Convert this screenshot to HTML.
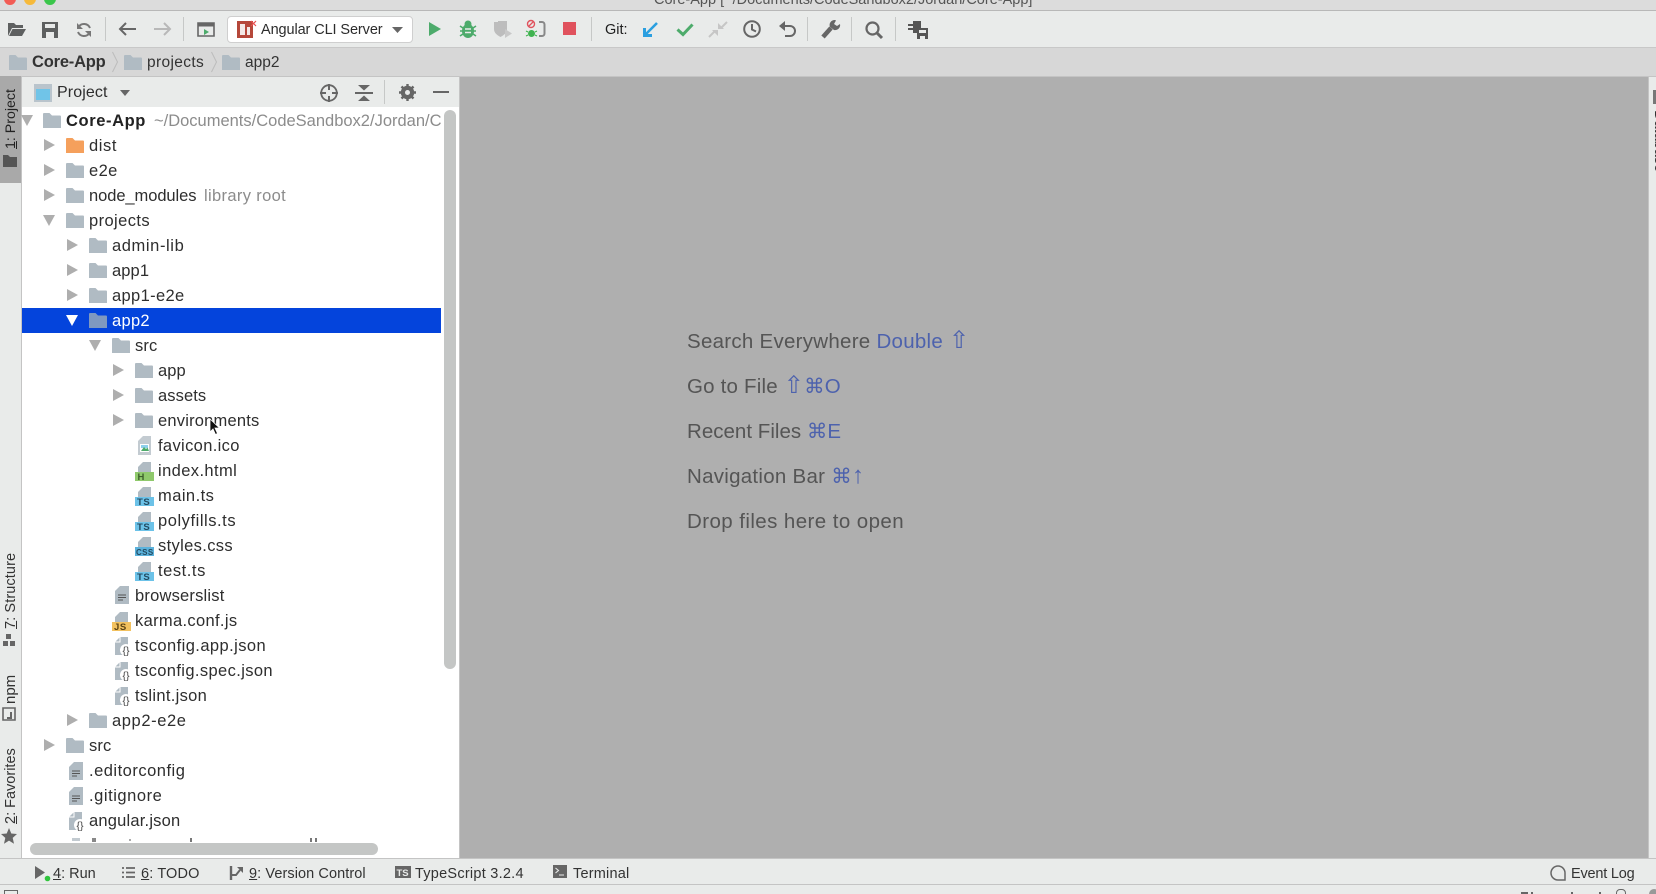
<!DOCTYPE html>
<html><head><meta charset="utf-8"><style>
html,body{margin:0;padding:0;width:1656px;height:894px;overflow:hidden;background:#e9ebea;font-family:"Liberation Sans",sans-serif;color:#333}
body{filter:blur(.3px)}
.a{position:absolute}
.t{position:absolute;white-space:nowrap;line-height:20px}
.r{position:absolute;white-space:nowrap;font-size:16.5px;line-height:25px;height:25px;margin-top:1px;color:#2e2e2e;letter-spacing:.1px}
.g{color:#8c8c8c}
svg{position:absolute;overflow:visible}
.sep{position:absolute;width:1px;background:#c6c8c7}
.v{position:absolute;white-space:nowrap;font-size:14.5px;line-height:16px;transform-origin:0 0;transform:rotate(-90deg);color:#333}
.w{position:absolute;left:687px;font-size:20.5px;line-height:26px;height:26px;white-space:nowrap;color:#555;letter-spacing:.42px}
.w b{font-weight:normal;color:#4d62ad}
.w i{font-style:normal;font-size:24px;line-height:0}
.f{position:absolute;font-size:14.5px;line-height:20px;top:864px;white-space:nowrap;color:#333}
u{text-decoration:underline}
</style></head><body>
<svg width="0" height="0" style="position:absolute"><defs>
<symbol id="fo" viewBox="0 0 18 15"><path d="M0 1a1 1 0 0 1 1-1h5.500L9 2.500h8a1 1 0 0 1 1 1V15H0z" fill="#b0bbc3"/></symbol>
<symbol id="ar" viewBox="0 0 11 12"><path d="M0 0l11 6-11 6z" fill="#aeaeae"/></symbol>
<symbol id="ad" viewBox="0 0 12 11"><path d="M0 0h12l-6 11z" fill="#aeaeae"/></symbol>
<symbol id="tx" viewBox="0 0 14 18"><path d="M0 5l5-5h9v18H0z" fill="#b0bbc3"/><path d="M3 9h8M3 11.500h8M3 14h5" stroke="#555" stroke-width="1" fill="none"/></symbol>
<symbol id="js" viewBox="0 0 18 19" overflow="visible"><path d="M0 5l5-5h8v18H0z" fill="#b0bbc3"/><path d="M5 0v5H0" stroke="#fff" fill="none"/><circle cx="11" cy="13" r="6" fill="#fff"/><text x="11" y="17" text-anchor="middle" font-size="10.500" font-family="Liberation Sans" fill="#444">{}</text></symbol>
</defs></svg>

<!-- title -->
<div class="a" style="left:0;top:0;width:1656px;height:10px;background:#dcdcdc;overflow:hidden">
<div class="a" style="left:4px;top:-7px;width:12px;height:12px;border-radius:6px;background:#f25c55"></div>
<div class="a" style="left:24px;top:-7px;width:12px;height:12px;border-radius:6px;background:#f6b93a"></div>
<div class="a" style="left:44px;top:-7px;width:12px;height:12px;border-radius:6px;background:#3bc64b"></div>
<div class="t" style="left:654px;top:-10px;font-size:14.5px;color:#555">Core-App [~/Documents/CodeSandbox2/Jordan/Core-App]</div>
</div>
<div class="a" style="left:0;top:10px;width:1656px;height:1px;background:#b8b8b8"></div>

<!-- toolbar -->
<div class="a" style="left:0;top:11px;width:1656px;height:36px;background:#e9ebea"></div>
<div class="a" style="left:0;top:47px;width:1656px;height:1px;background:#c8c8c8"></div>
<svg style="left:8px;top:22px" width="18" height="14"><path d="M0 14V1h6l2 2h7v3H4z" fill="#5e6060"/><path d="M1 14L4.500 7H18l-4 7z" fill="#5e6060"/></svg>
<svg style="left:42px;top:22px" width="16" height="16"><path d="M0 0h16v16H0z" fill="#5e6060"/><path d="M3 2h10v4H3zM4 10h8v6H4z" fill="#e9ebea"/></svg>
<svg style="left:76px;top:22px" width="16" height="16"><path d="M14 6A6.500 6.500 0 0 0 2.500 5M2 10a6.500 6.500 0 0 0 11.500 1" fill="none" stroke="#777" stroke-width="2"/><path d="M1 1v6h6zM15 15V9H9z" fill="#777"/></svg>
<div class="sep" style="left:105px;top:17px;height:24px"></div>
<svg style="left:119px;top:22px" width="17" height="14"><path d="M7 1L1 7l6 6M1 7h16" fill="none" stroke="#666" stroke-width="2"/></svg>
<svg style="left:154px;top:22px" width="17" height="14"><path d="M10 1l6 6-6 6M16 7H0" fill="none" stroke="#b8b8b8" stroke-width="2"/></svg>
<div class="sep" style="left:183px;top:17px;height:24px"></div>
<svg style="left:197px;top:22px" width="18" height="15"><path d="M1 1h16v13H1z" fill="none" stroke="#666" stroke-width="1.600"/><path d="M1 1h16v3.500H1z" fill="#666"/><path d="M7 7l5 3-5 3z" fill="#4dab6b"/></svg>
<div class="a" style="left:227px;top:16px;width:184px;height:25px;background:#fff;border:1px solid #cfcfcf;border-radius:4px"></div>
<svg style="left:237px;top:20px" width="19" height="18"><path d="M0 1h16v17H0z" fill="#b5473a"/><path d="M3 4h5v11H3zM10 7h3v8h-3z" fill="#f3e9e7"/><path d="M14 1l5 5M19 1l-5 5" stroke="#e85050" stroke-width="1.200"/></svg>
<div class="t" style="left:261px;top:20px;font-size:14.5px;color:#2c2c2c;letter-spacing:-.1px">Angular CLI Server</div>
<svg style="left:392px;top:27px" width="11" height="6"><path d="M0 0h11L5.500 6z" fill="#666"/></svg>
<svg style="left:429px;top:22px" width="12" height="14"><path d="M0 0l12 7-12 7z" fill="#4dab6b"/></svg>
<svg style="left:460px;top:20px" width="16" height="18"><ellipse cx="8" cy="11" rx="6" ry="7" fill="#4dab6b"/><circle cx="8" cy="4" r="3.500" fill="#4dab6b"/><path d="M0 6l3 2M16 6l-3 2M0 11h3M16 11h-3M0 16l3-2M16 16l-3-2" stroke="#4dab6b" stroke-width="1.600"/><path d="M5 9h6M5 12.500h6" stroke="#e9ebea" stroke-width="1.500"/></svg>
<svg style="left:494px;top:21px" width="18" height="17"><path d="M0 1h4v-1h9v8c0 4-3 6-6.500 8C3 14 0 12 0 8z" fill="#bdbdbd"/><path d="M11 8l7 4.500-7 4.500z" fill="#c8c8c8"/></svg>
<svg style="left:526px;top:20px" width="20" height="18"><circle cx="5" cy="4" r="3.500" fill="none" stroke="#e0525d" stroke-width="1.400"/><path d="M2.500 6.500l5-5" stroke="#e0525d" stroke-width="1.300"/><ellipse cx="5.500" cy="13.500" rx="3.500" ry="3.500" fill="#3fb34f"/><path d="M0 11l2 1M0 16l2-1M11 11l-2 1M11 16l-2-1" stroke="#3fb34f"/><path d="M13 2h3a2.500 2.500 0 0 1 2.500 2.500v9A2.500 2.500 0 0 1 16 16h-3" fill="none" stroke="#888" stroke-width="2"/></svg>
<div class="a" style="left:563px;top:22px;width:13px;height:13px;background:#e0525d"></div>
<div class="sep" style="left:591px;top:17px;height:24px"></div>
<div class="t" style="left:605px;top:20px;font-size:14.5px;color:#1e1e1e">Git:</div>
<svg style="left:643px;top:22px" width="15" height="15"><path d="M14 1L3 12" stroke="#2b9fe0" stroke-width="2.600"/><path d="M0 6v9h9v-3H3V6z" fill="#2b9fe0"/></svg>
<svg style="left:676px;top:23px" width="18" height="13"><path d="M1.500 6.500L7 11.500 16.500 1.500" fill="none" stroke="#4dab6b" stroke-width="3"/></svg>
<svg style="left:709px;top:21px" width="18" height="17"><path d="M0 16l6-6M18 1l-6 6" stroke="#c6c6c6" stroke-width="2"/><path d="M3 9h6v6zM15 8H9V2z" fill="#c6c6c6"/></svg>
<svg style="left:743px;top:20px" width="18" height="18"><circle cx="9" cy="9" r="7.800" fill="none" stroke="#666" stroke-width="2"/><path d="M9 4v5.500l4 2" fill="none" stroke="#666" stroke-width="2"/></svg>
<svg style="left:779px;top:21px" width="17" height="16"><path d="M3 5h8a5 5 0 0 1 0 10H6" fill="none" stroke="#666" stroke-width="2"/><path d="M6 0v10L0 5z" fill="#666"/></svg>
<div class="sep" style="left:807px;top:17px;height:24px"></div>
<svg style="left:821px;top:20px" width="19" height="19"><path d="M2 17L10 8" stroke="#666" stroke-width="4.500"/><path d="M14 0a5 5 0 0 0-5 7l4 3a5 5 0 0 0 6-6l-3 2-3-2 2-3.500z" fill="#666"/></svg>
<div class="sep" style="left:851px;top:17px;height:24px"></div>
<svg style="left:865px;top:21px" width="18" height="18"><circle cx="7.500" cy="7.500" r="6" fill="none" stroke="#666" stroke-width="2.200"/><path d="M12 12l5 5" stroke="#666" stroke-width="3"/></svg>
<div class="sep" style="left:895px;top:17px;height:24px"></div>
<svg style="left:908px;top:21px" width="20" height="18"><path d="M5 0h8v12H5zM0 3h5v2H0zM0 7h5v2H0z" fill="#555"/><path d="M9 7h11v11H9z" fill="#555"/><path d="M11 9h7v3h-7zM12 15h5v3h-5z" fill="#e9ebea"/></svg>

<!-- breadcrumb -->
<div class="a" style="left:0;top:48px;width:1656px;height:28px;background:#d7d7d7"></div>
<div class="a" style="left:0;top:76px;width:1656px;height:1px;background:#c4c4c4"></div>
<svg style="left:9px;top:55px" width="18" height="15"><use href="#fo"/></svg>
<div class="t" style="left:32px;top:52px;font-size:16.5px;font-weight:bold;color:#333;letter-spacing:-.2px">Core-App</div>
<svg style="left:112px;top:52px" width="6" height="20"><path d="M.5 0L5.500 10 .5 20" fill="none" stroke="#bcbcbc"/></svg>
<svg style="left:124px;top:55px" width="18" height="15"><use href="#fo"/></svg>
<div class="t" style="left:147px;top:53px;font-size:15.5px;color:#333;letter-spacing:.35px">projects</div>
<svg style="left:211px;top:52px" width="6" height="20"><path d="M.5 0L5.500 10 .5 20" fill="none" stroke="#bcbcbc"/></svg>
<svg style="left:222px;top:55px" width="18" height="15"><use href="#fo"/></svg>
<div class="t" style="left:245px;top:53px;font-size:15.5px;color:#333">app2</div>

<!-- left strip -->
<div class="a" style="left:0;top:77px;width:21px;height:781px;background:#e9ebea"></div>
<div class="a" style="left:21px;top:77px;width:1px;height:781px;background:#c4c4c4"></div>
<div class="a" style="left:0;top:76px;width:21px;height:107px;background:#a9a9a9"></div>
<div class="v" style="left:3px;top:149px;color:#222;font-size:14.2px"><u>1</u>: Project</div>
<svg style="left:3px;top:155px" width="14" height="12"><path d="M0 0h5l2 2h7v10H0z" fill="#555"/></svg>
<div class="v" style="left:3px;top:629px;letter-spacing:.1px"><u>7</u>: Structure</div>
<svg style="left:3px;top:634px" width="13" height="12"><path d="M3 0h5v5H3zM0 7h5v5H0zM7 7h5v5H7z" fill="#666"/></svg>
<div class="v" style="left:3px;top:704px;font-size:15px">npm</div>
<svg style="left:2px;top:707px" width="14" height="14"><path d="M1 1h12v12H1z" fill="none" stroke="#666" stroke-width="1.600"/><path d="M8 5h2v7H5v-2h3z" fill="#666"/></svg>
<div class="v" style="left:3px;top:824px"><u>2</u>: Favorites</div>
<svg style="left:1px;top:828px" width="16" height="16"><path d="M8 0l2.300 5.500 5.700.5-4.300 3.900 1.300 5.800L8 12.600l-5 3.100 1.300-5.800L0 6l5.700-.5z" fill="#666"/></svg>

<!-- project panel -->
<div class="a" style="left:22px;top:77px;width:437px;height:30px;background:#e9ebea"></div>
<div class="a" style="left:22px;top:107px;width:437px;height:751px;background:#fff;overflow:hidden"></div>
<div class="a" style="left:459px;top:77px;width:1px;height:781px;background:#c4c4c4"></div>
<svg style="left:34px;top:84px" width="18" height="18"><path d="M0 0h18v18H0z" fill="#b9c4cc"/><path d="M2 5h14v11H2z" fill="#70c4e8"/></svg>
<div class="t" style="left:57px;top:83px;font-size:16px;color:#2e2e2e;letter-spacing:.1px">Project</div>
<svg style="left:120px;top:90px" width="10" height="6"><path d="M0 0h10L5 6z" fill="#666"/></svg>
<svg style="left:320px;top:84px" width="18" height="18"><circle cx="9" cy="9" r="7.800" fill="none" stroke="#666" stroke-width="1.800"/><path d="M0 9h6M12 9h6M9 0v6M9 12v6" stroke="#666" stroke-width="2"/></svg>
<svg style="left:355px;top:84px" width="18" height="18"><path d="M0 9h18" stroke="#666" stroke-width="2"/><path d="M3 1h12L9 6.500zM3 17h12L9 11.500z" fill="#666"/></svg>
<div class="sep" style="left:384px;top:80px;height:24px"></div>
<svg style="left:399px;top:84px" width="17" height="17"><circle cx="8.500" cy="8.500" r="5" fill="none" stroke="#666" stroke-width="3.400"/><path d="M8.500 0v17M0 8.500h17M2.500 2.500l12 12M14.500 2.500l-12 12" stroke="#666" stroke-width="2.400"/><circle cx="8.500" cy="8.500" r="2.500" fill="#e9ebea"/></svg>
<div class="a" style="left:433px;top:91px;width:16px;height:2px;background:#666"></div>

<!-- selection -->
<div class="a" style="left:22px;top:308px;width:419px;height:25px;background:#0444dc"></div>

<!-- tree -->
<svg style="left:21px;top:115px" width="12" height="11"><use href="#ad"/></svg>
<svg style="left:43px;top:113px" width="18" height="15"><use href="#fo"/></svg>
<div class="a" style="left:66px;top:109px;width:375px;height:25px;overflow:hidden;white-space:nowrap;font-size:16.5px;line-height:25px;color:#8c8c8c"><b style="color:#222;margin-right:8px;letter-spacing:.6px">Core-App</b>~/Documents/CodeSandbox2/Jordan/Core-App</div>

<svg style="left:44px;top:139px" width="11" height="12"><use href="#ar"/></svg>
<svg style="left:66px;top:138px" width="18" height="15"><path d="M0 1a1 1 0 0 1 1-1h5.500L9 2.500h8a1 1 0 0 1 1 1V15H0z" fill="#f5a05c"/></svg>
<div class="r" style="left:89px;top:133px;letter-spacing:.6px">dist</div>

<svg style="left:44px;top:164px" width="11" height="12"><use href="#ar"/></svg>
<svg style="left:66px;top:163px" width="18" height="15"><use href="#fo"/></svg>
<div class="r" style="left:89px;top:158px;letter-spacing:.4px">e2e</div>

<svg style="left:44px;top:189px" width="11" height="12"><use href="#ar"/></svg>
<svg style="left:66px;top:188px" width="18" height="15"><use href="#fo"/></svg>
<div class="r" style="left:89px;top:183px;letter-spacing:-.07px">node_modules <span class="g" style="margin-left:3px;letter-spacing:.35px">library root</span></div>

<svg style="left:43px;top:215px" width="12" height="11"><use href="#ad"/></svg>
<svg style="left:66px;top:213px" width="18" height="15"><use href="#fo"/></svg>
<div class="r" style="left:89px;top:208px;letter-spacing:.4px">projects</div>

<svg style="left:67px;top:239px" width="11" height="12"><use href="#ar"/></svg>
<svg style="left:89px;top:238px" width="18" height="15"><use href="#fo"/></svg>
<div class="r" style="left:112px;top:233px;letter-spacing:.6px">admin-lib</div>

<svg style="left:67px;top:264px" width="11" height="12"><use href="#ar"/></svg>
<svg style="left:89px;top:263px" width="18" height="15"><use href="#fo"/></svg>
<div class="r" style="left:112px;top:258px">app1</div>

<svg style="left:67px;top:289px" width="11" height="12"><use href="#ar"/></svg>
<svg style="left:89px;top:288px" width="18" height="15"><use href="#fo"/></svg>
<div class="r" style="left:112px;top:283px;letter-spacing:.35px">app1-e2e</div>

<svg style="left:66px;top:315px" width="12" height="11"><path d="M0 0h12L6 11z" fill="#fff"/></svg>
<svg style="left:89px;top:313px" width="18" height="15"><path d="M0 1a1 1 0 0 1 1-1h5.500L9 2.500h8a1 1 0 0 1 1 1V15H0z" fill="#7f99c0"/></svg>
<div class="r" style="left:112px;top:308px;color:#fff;letter-spacing:.3px">app2</div>

<svg style="left:89px;top:340px" width="12" height="11"><use href="#ad"/></svg>
<svg style="left:112px;top:338px" width="18" height="15"><use href="#fo"/></svg>
<div class="r" style="left:135px;top:333px">src</div>

<svg style="left:113px;top:364px" width="11" height="12"><use href="#ar"/></svg>
<svg style="left:135px;top:363px" width="18" height="15"><use href="#fo"/></svg>
<div class="r" style="left:158px;top:358px">app</div>

<svg style="left:113px;top:389px" width="11" height="12"><use href="#ar"/></svg>
<svg style="left:135px;top:388px" width="18" height="15"><use href="#fo"/></svg>
<div class="r" style="left:158px;top:383px">assets</div>

<svg style="left:113px;top:414px" width="11" height="12"><use href="#ar"/></svg>
<svg style="left:135px;top:413px" width="18" height="15"><use href="#fo"/></svg>
<div class="r" style="left:158px;top:408px;letter-spacing:.2px">environments</div>

<svg style="left:138px;top:436px" width="13" height="19"><path d="M0 5l5-5h8v19H0z" fill="#c3cbd1"/><path d="M2 8h9v8H2z" fill="#fff"/><path d="M3 9h7v3H3z" fill="#8ed0ec"/><path d="M3 15l3-4 2 2 1.500-1.500L11 15z" fill="#4dab6b"/></svg>
<div class="r" style="left:158px;top:433px;letter-spacing:.35px">favicon.ico</div>

<svg style="left:135px;top:462px" width="19" height="19"><path d="M3 5l5-5h8v11H3z" fill="#b0bbc3"/><path d="M0 10h19v9H0z" fill="#8fc96c"/><text x="2.500" y="18" font-size="9.500" font-weight="bold" font-family="Liberation Sans" fill="#3d5f2c">H</text></svg>
<div class="r" style="left:158px;top:458px;letter-spacing:.4px">index.html</div>

<svg style="left:135px;top:487px" width="19" height="19"><path d="M3 5l5-5h8v11H3z" fill="#b0bbc3"/><path d="M0 10h19v9H0z" fill="#6cc2e8"/><text x="2" y="18" font-size="9.500" font-weight="bold" letter-spacing=".6" font-family="Liberation Sans" fill="#234a60">TS</text></svg>
<div class="r" style="left:158px;top:483px;letter-spacing:.45px">main.ts</div>

<svg style="left:135px;top:512px" width="19" height="19"><path d="M3 5l5-5h8v11H3z" fill="#b0bbc3"/><path d="M0 10h19v9H0z" fill="#6cc2e8"/><text x="2" y="18" font-size="9.500" font-weight="bold" letter-spacing=".6" font-family="Liberation Sans" fill="#234a60">TS</text></svg>
<div class="r" style="left:158px;top:508px;letter-spacing:.55px">polyfills.ts</div>

<svg style="left:135px;top:537px" width="19" height="19"><path d="M3 5l5-5h8v11H3z" fill="#b0bbc3"/><path d="M0 10h19v9H0z" fill="#5bb2dc"/><text x="1" y="18" font-size="8" font-weight="bold" letter-spacing=".4" font-family="Liberation Sans" fill="#234a60">CSS</text></svg>
<div class="r" style="left:158px;top:533px;letter-spacing:.35px">styles.css</div>

<svg style="left:135px;top:562px" width="19" height="19"><path d="M3 5l5-5h8v11H3z" fill="#b0bbc3"/><path d="M0 10h19v9H0z" fill="#6cc2e8"/><text x="2" y="18" font-size="9.500" font-weight="bold" letter-spacing=".6" font-family="Liberation Sans" fill="#234a60">TS</text></svg>
<div class="r" style="left:158px;top:558px;letter-spacing:.55px">test.ts</div>

<svg style="left:115px;top:586px" width="14" height="18"><use href="#tx"/></svg>
<div class="r" style="left:135px;top:583px;letter-spacing:.2px">browserslist</div>

<svg style="left:112px;top:612px" width="19" height="19"><path d="M3 5l5-5h8v11H3z" fill="#b0bbc3"/><path d="M0 10h19v9H0z" fill="#f2c15f"/><text x="2" y="18" font-size="9.500" font-weight="bold" letter-spacing=".6" font-family="Liberation Sans" fill="#5a4214">JS</text></svg>
<div class="r" style="left:135px;top:608px;letter-spacing:.33px">karma.conf.js</div>

<svg style="left:115px;top:637px" width="18" height="19"><use href="#js"/></svg>
<div class="r" style="left:135px;top:633px;letter-spacing:.43px">tsconfig.app.json</div>

<svg style="left:115px;top:662px" width="18" height="19"><use href="#js"/></svg>
<div class="r" style="left:135px;top:658px;letter-spacing:.38px">tsconfig.spec.json</div>

<svg style="left:115px;top:687px" width="18" height="19"><use href="#js"/></svg>
<div class="r" style="left:135px;top:683px;letter-spacing:.3px">tslint.json</div>

<svg style="left:67px;top:714px" width="11" height="12"><use href="#ar"/></svg>
<svg style="left:89px;top:713px" width="18" height="15"><use href="#fo"/></svg>
<div class="r" style="left:112px;top:708px;letter-spacing:.6px">app2-e2e</div>

<svg style="left:44px;top:739px" width="11" height="12"><use href="#ar"/></svg>
<svg style="left:66px;top:738px" width="18" height="15"><use href="#fo"/></svg>
<div class="r" style="left:89px;top:733px">src</div>

<svg style="left:69px;top:762px" width="14" height="18"><use href="#tx"/></svg>
<div class="r" style="left:89px;top:758px;letter-spacing:.5px">.editorconfig</div>

<svg style="left:69px;top:787px" width="14" height="18"><use href="#tx"/></svg>
<div class="r" style="left:89px;top:783px;letter-spacing:.55px">.gitignore</div>

<svg style="left:69px;top:812px" width="18" height="19"><use href="#js"/></svg>
<div class="r" style="left:89px;top:808px;letter-spacing:.2px">angular.json</div>

<!-- clipped next row: only ascender tips show -->
<div class="a" style="left:72px;top:838px;width:8px;height:3px;background:#c2cad0"></div>
<div class="a" style="left:92px;top:838px;width:4px;height:4px;background:#888"></div>
<div class="a" style="left:129px;top:839px;width:2px;height:2px;background:#aaa"></div>
<div class="a" style="left:190px;top:838px;width:2px;height:4px;background:#777"></div>
<div class="a" style="left:310px;top:838px;width:2px;height:4px;background:#777"></div>
<div class="a" style="left:315px;top:838px;width:2px;height:4px;background:#777"></div>

<!-- cursor -->
<svg style="left:209px;top:418px" width="12" height="18"><path d="M1 1v13l3-3 2.500 5.500 2-1L6 10h4.500z" fill="#111" stroke="#fff" stroke-width=".8"/></svg>

<!-- scrollbars -->
<div class="a" style="left:441px;top:107px;width:18px;height:751px;background:#fff"></div>
<div class="a" style="left:444px;top:110px;width:12px;height:559px;border-radius:6px;background:#c4c6c5"></div>
<div class="a" style="left:30px;top:843px;width:348px;height:12px;border-radius:6px;background:#c4c6c5"></div>

<!-- editor -->
<div class="a" style="left:460px;top:77px;width:1188px;height:781px;background:#afafaf"></div>
<div class="w" style="top:329px;letter-spacing:.27px">Search Everywhere <b>Double <i>⇧</i></b></div>
<div class="w" style="top:374px;letter-spacing:.2px">Go to File <b><i>⇧</i>⌘O</b></div>
<div class="w" style="top:419px;letter-spacing:.02px">Recent Files <b>⌘E</b></div>
<div class="w" style="top:464px;letter-spacing:.27px">Navigation Bar <b>⌘<i>↑</i></b></div>
<div class="w" style="top:509px">Drop files here to open</div>

<!-- right strip -->
<div class="a" style="left:1648px;top:77px;width:8px;height:781px;background:#e9ebea;border-left:1px solid #c4c4c4;box-sizing:border-box;overflow:hidden">
<div class="a" style="left:18px;top:33px;white-space:nowrap;font-size:14.5px;line-height:16px;transform-origin:0 0;transform:rotate(90deg);color:#333">Database</div>
<div class="a" style="left:4px;top:13px;width:4px;height:14px;background:#777"></div>
</div>

<!-- bottom bar -->
<div class="a" style="left:0;top:858px;width:1656px;height:1px;background:#c4c4c4"></div>
<div class="a" style="left:0;top:859px;width:1656px;height:25px;background:#e9ebea"></div>
<div class="a" style="left:0;top:884px;width:1656px;height:1px;background:#c4c4c4"></div>
<div class="a" style="left:0;top:885px;width:1656px;height:9px;background:#e9ebea"></div>
<svg style="left:35px;top:866px" width="16" height="16"><path d="M0 0l10 6.500L0 13z" fill="#666"/><circle cx="12.500" cy="12.500" r="2.800" fill="#2fc43c"/></svg>
<div class="f" style="left:53px"><u>4</u>: Run</div>
<svg style="left:122px;top:867px" width="13" height="11"><path d="M0 1h2M4 1h9M0 5.500h2M4 5.500h9M0 10h2M4 10h9" stroke="#666" stroke-width="1.700"/></svg>
<div class="f" style="left:141px;letter-spacing:.15px"><u>6</u>: TODO</div>
<svg style="left:230px;top:866px" width="13" height="14"><path d="M1 0v14" stroke="#666" stroke-width="2.400"/><path d="M1 9h5l4-5" fill="none" stroke="#666" stroke-width="2"/><path d="M7 1h6v6z" fill="#666"/></svg>
<div class="f" style="left:249px;letter-spacing:.08px"><u>9</u>: Version Control</div>
<svg style="left:395px;top:866px" width="16" height="12"><path d="M0 0h16v12H0z" fill="#666"/><text x="1.500" y="10" font-size="9.500" font-weight="bold" font-family="Liberation Sans" fill="#e9ebea">TS</text></svg>
<div class="f" style="left:415px;letter-spacing:.25px">TypeScript 3.2.4</div>
<svg style="left:553px;top:865px" width="14" height="13"><path d="M0 0h14v13H0z" fill="#666"/><path d="M2.500 3l3 2.500-3 2.500M6 10h5" fill="none" stroke="#e9ebea" stroke-width="1.100"/></svg>
<div class="f" style="left:573px;letter-spacing:.2px">Terminal</div>
<svg style="left:1550px;top:865px" width="16" height="16"><path d="M8 1a7 7 0 0 1 7 7v7H8A7 7 0 0 1 8 1z" fill="none" stroke="#666" stroke-width="1.500"/></svg>
<div class="f" style="left:1571px;letter-spacing:-.2px">Event Log</div>

<!-- status peek -->
<div class="a" style="left:0;top:885px;width:1656px;height:9px;overflow:hidden">
<div class="a" style="left:4px;top:5px;width:12px;height:12px;border:1px solid #666"></div>
<div class="a" style="left:1521px;top:7px;width:7px;height:2px;background:#666"></div>
<div class="a" style="left:1531px;top:7px;width:2px;height:2px;background:#666"></div>
<div class="a" style="left:1571px;top:7px;width:2px;height:2px;background:#666"></div>
<div class="a" style="left:1599px;top:7px;width:2px;height:2px;background:#666"></div>
<div class="a" style="left:1616px;top:4px;width:8px;height:10px;border:1.500px solid #666;border-radius:4px"></div>
<div class="a" style="left:1649px;top:4px;width:10px;height:10px;border-radius:5px;background:#999"></div>
</div>
</body></html>
